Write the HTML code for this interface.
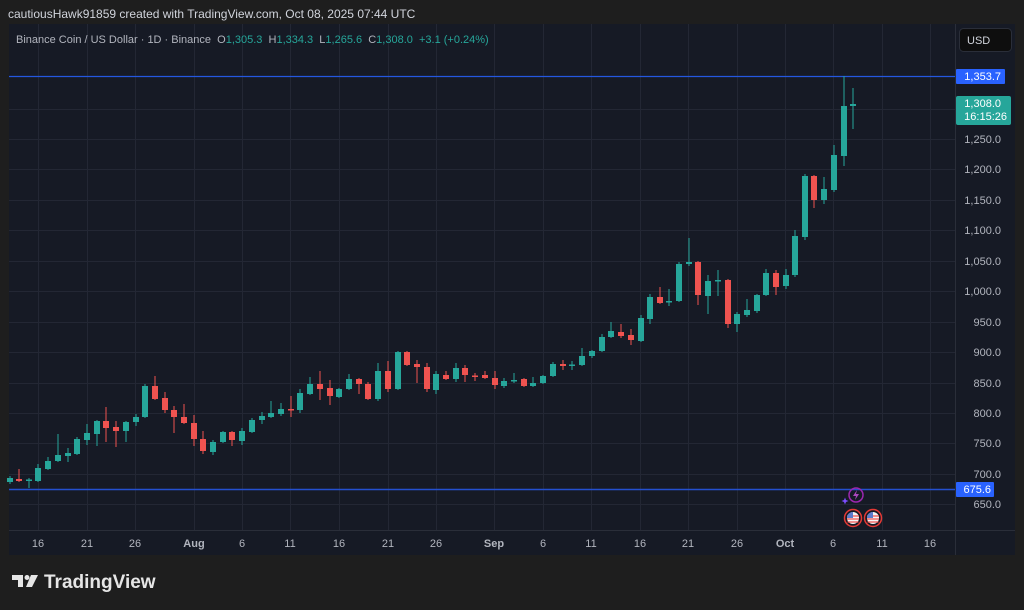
<!DOCTYPE html>
<html><head><meta charset="utf-8"><style>
html,body{margin:0;padding:0;background:#1e1e1e;width:1024px;height:610px;overflow:hidden;font-family:"Liberation Sans",sans-serif}
svg{position:absolute;left:0;top:0}
</style></head><body>
<svg width="1024" height="610" viewBox="0 0 1024 610" xmlns="http://www.w3.org/2000/svg" font-family="Liberation Sans, sans-serif">
<rect x="0" y="0" width="1024" height="610" fill="#1e1e1e"/>
<text x="8" y="18" font-size="12" fill="#d1d4dc">cautiousHawk91859 created with TradingView.com, Oct 08, 2025 07:44 UTC</text>
<rect x="9" y="24" width="1006" height="531" fill="#161a25"/>
<g stroke="#232734" stroke-width="1">
<line x1="9" x2="955" y1="139.5" y2="139.5"/><line x1="9" x2="955" y1="169.5" y2="169.5"/><line x1="9" x2="955" y1="200.5" y2="200.5"/><line x1="9" x2="955" y1="230.5" y2="230.5"/><line x1="9" x2="955" y1="261.5" y2="261.5"/><line x1="9" x2="955" y1="291.5" y2="291.5"/><line x1="9" x2="955" y1="322.5" y2="322.5"/><line x1="9" x2="955" y1="352.5" y2="352.5"/><line x1="9" x2="955" y1="383.5" y2="383.5"/><line x1="9" x2="955" y1="413.5" y2="413.5"/><line x1="9" x2="955" y1="443.5" y2="443.5"/><line x1="9" x2="955" y1="474.5" y2="474.5"/><line x1="9" x2="955" y1="504.5" y2="504.5"/><line x1="9" x2="955" y1="109.5" y2="109.5"/>
<line y1="24" y2="530" x1="38.5" x2="38.5"/><line y1="24" y2="530" x1="87.5" x2="87.5"/><line y1="24" y2="530" x1="135.5" x2="135.5"/><line y1="24" y2="530" x1="194.5" x2="194.5"/><line y1="24" y2="530" x1="242.5" x2="242.5"/><line y1="24" y2="530" x1="290.5" x2="290.5"/><line y1="24" y2="530" x1="339.5" x2="339.5"/><line y1="24" y2="530" x1="388.5" x2="388.5"/><line y1="24" y2="530" x1="436.5" x2="436.5"/><line y1="24" y2="530" x1="494.5" x2="494.5"/><line y1="24" y2="530" x1="543.5" x2="543.5"/><line y1="24" y2="530" x1="591.5" x2="591.5"/><line y1="24" y2="530" x1="640.5" x2="640.5"/><line y1="24" y2="530" x1="688.5" x2="688.5"/><line y1="24" y2="530" x1="737.5" x2="737.5"/><line y1="24" y2="530" x1="785.5" x2="785.5"/><line y1="24" y2="530" x1="833.5" x2="833.5"/><line y1="24" y2="530" x1="882.5" x2="882.5"/><line y1="24" y2="530" x1="930.5" x2="930.5"/>
</g>
<line x1="9" x2="1015" y1="530.5" y2="530.5" stroke="#2a2e39"/>
<line x1="955.5" x2="955.5" y1="24" y2="555" stroke="#2a2e39"/>
<line x1="9" x2="955" y1="76.5" y2="76.5" stroke="#2457e0" stroke-width="1.2"/>
<line x1="9" x2="955" y1="489.5" y2="489.5" stroke="#2450d0" stroke-width="1.5"/>
<g font-size="11" fill="#b2b5be">
<text x="16" y="43" style="white-space:pre">Binance Coin / US Dollar · 1D · Binance  O<tspan fill="#26a69a">1,305.3</tspan>  H<tspan fill="#26a69a">1,334.3</tspan>  L<tspan fill="#26a69a">1,265.6</tspan>  C<tspan fill="#26a69a">1,308.0</tspan>  <tspan fill="#26a69a">+3.1 (+0.24%)</tspan></text>
</g>
<rect x="959.5" y="28.5" width="52" height="23" rx="4" fill="#0e0e0e" stroke="#2a2e39"/>
<text x="967" y="44" font-size="11" fill="#d1d4dc">USD</text>
<g font-size="11" fill="#b2b5be" text-anchor="end">
<text x="1001" y="143">1,250.0</text><text x="1001" y="173">1,200.0</text><text x="1001" y="204">1,150.0</text><text x="1001" y="234">1,100.0</text><text x="1001" y="265">1,050.0</text><text x="1001" y="295">1,000.0</text><text x="1001" y="326">950.0</text><text x="1001" y="356">900.0</text><text x="1001" y="387">850.0</text><text x="1001" y="417">800.0</text><text x="1001" y="447">750.0</text><text x="1001" y="478">700.0</text><text x="1001" y="508">650.0</text>
</g>
<rect x="956" y="69" width="49" height="15" rx="1" fill="#2962ff"/>
<text x="1001" y="80" font-size="11" fill="#fff" text-anchor="end">1,353.7</text>
<rect x="956" y="96" width="55" height="29" rx="2" fill="#26a69a"/>
<text x="1001" y="107" font-size="11" fill="#fff" text-anchor="end">1,308.0</text>
<text x="1007" y="120" font-size="11" fill="#fff" text-anchor="end">16:15:26</text>
<rect x="956" y="482" width="38" height="15" rx="1" fill="#2962ff"/>
<text x="991" y="493" font-size="11" fill="#fff" text-anchor="end">675.6</text>
<g font-size="11" fill="#b2b5be" text-anchor="middle">
<text x="38" y="547">16</text><text x="87" y="547">21</text><text x="135" y="547">26</text><text x="194" y="547" font-weight="bold">Aug</text><text x="242" y="547">6</text><text x="290" y="547">11</text><text x="339" y="547">16</text><text x="388" y="547">21</text><text x="436" y="547">26</text><text x="494" y="547" font-weight="bold">Sep</text><text x="543" y="547">6</text><text x="591" y="547">11</text><text x="640" y="547">16</text><text x="688" y="547">21</text><text x="737" y="547">26</text><text x="785" y="547" font-weight="bold">Oct</text><text x="833" y="547">6</text><text x="882" y="547">11</text><text x="930" y="547">16</text>
</g>
<g id="c">
<g fill="#26a69a">
<rect x="9.5" y="476" width="1" height="8"/><rect x="7" y="478" width="6" height="4"/>
<rect x="28.5" y="478" width="1" height="10"/><rect x="26" y="479.5" width="6" height="1.5"/>
<rect x="37.5" y="464" width="1" height="18"/><rect x="35" y="468" width="6" height="13"/>
<rect x="47.5" y="457" width="1" height="13"/><rect x="45" y="461" width="6" height="8"/>
<rect x="57.5" y="434" width="1" height="28"/><rect x="55" y="455" width="6" height="6"/>
<rect x="67.5" y="448" width="1" height="14"/><rect x="65" y="453" width="6" height="3"/>
<rect x="76.5" y="437" width="1" height="18"/><rect x="74" y="439" width="6" height="15"/>
<rect x="86.5" y="424" width="1" height="21"/><rect x="84" y="433" width="6" height="7"/>
<rect x="96.5" y="420" width="1" height="26"/><rect x="94" y="421" width="6" height="13"/>
<rect x="125.5" y="421" width="1" height="21"/><rect x="123" y="422" width="6" height="9"/>
<rect x="135.5" y="414" width="1" height="12"/><rect x="133" y="417" width="6" height="5"/>
<rect x="144.5" y="384" width="1" height="34"/><rect x="142" y="386" width="6" height="31"/>
<rect x="212.5" y="440" width="1" height="15"/><rect x="210" y="442" width="6" height="10"/>
<rect x="222.5" y="431" width="1" height="12"/><rect x="220" y="432" width="6" height="10"/>
<rect x="241.5" y="428" width="1" height="17"/><rect x="239" y="431" width="6" height="10"/>
<rect x="251.5" y="418" width="1" height="15"/><rect x="249" y="420" width="6" height="12"/>
<rect x="261.5" y="412" width="1" height="12"/><rect x="259" y="416" width="6" height="4"/>
<rect x="270.5" y="401" width="1" height="17"/><rect x="268" y="413" width="6" height="4"/>
<rect x="280.5" y="403" width="1" height="13"/><rect x="278" y="409" width="6" height="5"/>
<rect x="299.5" y="389" width="1" height="24"/><rect x="297" y="393" width="6" height="17"/>
<rect x="309.5" y="377" width="1" height="18"/><rect x="307" y="384" width="6" height="10"/>
<rect x="338.5" y="388" width="1" height="10"/><rect x="336" y="389" width="6" height="8"/>
<rect x="348.5" y="374" width="1" height="16"/><rect x="346" y="379" width="6" height="10"/>
<rect x="377.5" y="363" width="1" height="38"/><rect x="375" y="371" width="6" height="28"/>
<rect x="397.5" y="351" width="1" height="39"/><rect x="395" y="352" width="6" height="37"/>
<rect x="435.5" y="371" width="1" height="23"/><rect x="433" y="374" width="6" height="16"/>
<rect x="455.5" y="363" width="1" height="19"/><rect x="453" y="368" width="6" height="11"/>
<rect x="503.5" y="378" width="1" height="10"/><rect x="501" y="381" width="6" height="5"/>
<rect x="513.5" y="373" width="1" height="10"/><rect x="511" y="380" width="6" height="1.5"/>
<rect x="532.5" y="377" width="1" height="10"/><rect x="530" y="383" width="6" height="3"/>
<rect x="542.5" y="375" width="1" height="9"/><rect x="540" y="376" width="6" height="7"/>
<rect x="552.5" y="362" width="1" height="15"/><rect x="550" y="364" width="6" height="12"/>
<rect x="571.5" y="361" width="1" height="9"/><rect x="569" y="364.5" width="6" height="1.5"/>
<rect x="581.5" y="348" width="1" height="18"/><rect x="579" y="356" width="6" height="9"/>
<rect x="591.5" y="350" width="1" height="8"/><rect x="589" y="351" width="6" height="5"/>
<rect x="601.5" y="334" width="1" height="18"/><rect x="599" y="337" width="6" height="14"/>
<rect x="610.5" y="322" width="1" height="16"/><rect x="608" y="331" width="6" height="6"/>
<rect x="640.5" y="315" width="1" height="27"/><rect x="638" y="318" width="6" height="23"/>
<rect x="649.5" y="294" width="1" height="30"/><rect x="647" y="297" width="6" height="22"/>
<rect x="668.5" y="289" width="1" height="17"/><rect x="666" y="301" width="6" height="1.5"/>
<rect x="678.5" y="262" width="1" height="40"/><rect x="676" y="264" width="6" height="37"/>
<rect x="688.5" y="238" width="1" height="28"/><rect x="686" y="262" width="6" height="2"/>
<rect x="707.5" y="275" width="1" height="39"/><rect x="705" y="281" width="6" height="15"/>
<rect x="717.5" y="270" width="1" height="26"/><rect x="715" y="280" width="6" height="1.5"/>
<rect x="736.5" y="312" width="1" height="20"/><rect x="734" y="314" width="6" height="10"/>
<rect x="746.5" y="299" width="1" height="18"/><rect x="744" y="310" width="6" height="5"/>
<rect x="756.5" y="294" width="1" height="19"/><rect x="754" y="295" width="6" height="16"/>
<rect x="765.5" y="269" width="1" height="27"/><rect x="763" y="273" width="6" height="22"/>
<rect x="785.5" y="269" width="1" height="20"/><rect x="783" y="275" width="6" height="11"/>
<rect x="794.5" y="230" width="1" height="47"/><rect x="792" y="236" width="6" height="39"/>
<rect x="804.5" y="174" width="1" height="66"/><rect x="802" y="176" width="6" height="61"/>
<rect x="823.5" y="177" width="1" height="27"/><rect x="821" y="189" width="6" height="11"/>
<rect x="833.5" y="145" width="1" height="47"/><rect x="831" y="155" width="6" height="35"/>
<rect x="843.5" y="76" width="1" height="90"/><rect x="841" y="106" width="6" height="50"/>
<rect x="852.5" y="88" width="1" height="41"/><rect x="850" y="104" width="6" height="2"/>
</g>
<g fill="#ef5350">
<rect x="18.5" y="469" width="1" height="13"/><rect x="16" y="479" width="6" height="2"/>
<rect x="105.5" y="407" width="1" height="35"/><rect x="103" y="421" width="6" height="7"/>
<rect x="115.5" y="421" width="1" height="26"/><rect x="113" y="427" width="6" height="4"/>
<rect x="154.5" y="376" width="1" height="24"/><rect x="152" y="386" width="6" height="13"/>
<rect x="164.5" y="392" width="1" height="21"/><rect x="162" y="398" width="6" height="12"/>
<rect x="173.5" y="406" width="1" height="27"/><rect x="171" y="410" width="6" height="7"/>
<rect x="183.5" y="404" width="1" height="20"/><rect x="181" y="417" width="6" height="6"/>
<rect x="193.5" y="415" width="1" height="31"/><rect x="191" y="423" width="6" height="16"/>
<rect x="202.5" y="431" width="1" height="23"/><rect x="200" y="439" width="6" height="12"/>
<rect x="231.5" y="431" width="1" height="15"/><rect x="229" y="432" width="6" height="8"/>
<rect x="290.5" y="396" width="1" height="21"/><rect x="288" y="409" width="6" height="1.5"/>
<rect x="319.5" y="371" width="1" height="29"/><rect x="317" y="384" width="6" height="5"/>
<rect x="329.5" y="380" width="1" height="25"/><rect x="327" y="388" width="6" height="8"/>
<rect x="358.5" y="378" width="1" height="16"/><rect x="356" y="379" width="6" height="5"/>
<rect x="367.5" y="382" width="1" height="18"/><rect x="365" y="384" width="6" height="15"/>
<rect x="387.5" y="361" width="1" height="31"/><rect x="385" y="371" width="6" height="18"/>
<rect x="406.5" y="351" width="1" height="15"/><rect x="404" y="352" width="6" height="13"/>
<rect x="416.5" y="360" width="1" height="23"/><rect x="414" y="364" width="6" height="3"/>
<rect x="426.5" y="363" width="1" height="29"/><rect x="424" y="367" width="6" height="22"/>
<rect x="445.5" y="371" width="1" height="9"/><rect x="443" y="375" width="6" height="4"/>
<rect x="464.5" y="365" width="1" height="17"/><rect x="462" y="368" width="6" height="7"/>
<rect x="474.5" y="373" width="1" height="8"/><rect x="472" y="375.5" width="6" height="1.5"/>
<rect x="484.5" y="371" width="1" height="8"/><rect x="482" y="375" width="6" height="3"/>
<rect x="494.5" y="371" width="1" height="18"/><rect x="492" y="378" width="6" height="7"/>
<rect x="523.5" y="378" width="1" height="9"/><rect x="521" y="379" width="6" height="7"/>
<rect x="562.5" y="360" width="1" height="10"/><rect x="560" y="364" width="6" height="2"/>
<rect x="620.5" y="324" width="1" height="14"/><rect x="618" y="332" width="6" height="4"/>
<rect x="630.5" y="329" width="1" height="16"/><rect x="628" y="335" width="6" height="5"/>
<rect x="659.5" y="287" width="1" height="17"/><rect x="657" y="297" width="6" height="6"/>
<rect x="697.5" y="261" width="1" height="44"/><rect x="695" y="262" width="6" height="33"/>
<rect x="727.5" y="279" width="1" height="49"/><rect x="725" y="280" width="6" height="44"/>
<rect x="775.5" y="270" width="1" height="25"/><rect x="773" y="273" width="6" height="14"/>
<rect x="813.5" y="175" width="1" height="33"/><rect x="811" y="176" width="6" height="24"/>
</g>
</g>
<circle cx="856" cy="495" r="7" fill="none" stroke="#9c27b0" stroke-width="1.5"/>
<path d="M857 490 L853 496 L856 496 L855 500 L859 494 L856 494 Z" fill="#ab47bc"/>
<path d="M844 500 l1 -2.5 l1 2.5 l2.5 1 l-2.5 1 l-1 2.5 l-1 -2.5 l-2.5 -1 Z" fill="#7c4dff"/>
<g>
<circle cx="853" cy="518" r="8.5" fill="#161a25" stroke="#e53935" stroke-width="1.5"/>
<circle cx="853" cy="518" r="6" fill="#f5f5f5"/>
<path d="M847 516h12M847 519h12M847.5 522h11" stroke="#ef5350" stroke-width="1.3"/>
<path d="M847 518 a6 6 0 0 1 6 -6 v6 z" fill="#5c7ccc"/>
<circle cx="873" cy="518" r="8.5" fill="#161a25" stroke="#e53935" stroke-width="1.5"/>
<circle cx="873" cy="518" r="6" fill="#f5f5f5"/>
<path d="M867 516h12M867 519h12M867.5 522h11" stroke="#ef5350" stroke-width="1.3"/>
<path d="M867 518 a6 6 0 0 1 6 -6 v6 z" fill="#5c7ccc"/>
</g>
<g fill="#e6e6e6">
<path d="M12 575 h11 v12 h-5 v-7 h-6 z"/>
<circle cx="27" cy="577.5" r="2.5"/>
<path d="M31 575 h7 l-6 12 h-6 z"/>
</g>
<text x="44" y="588" font-size="19" font-weight="bold" fill="#e6e6e6">TradingView</text>
</svg>
</body></html>
